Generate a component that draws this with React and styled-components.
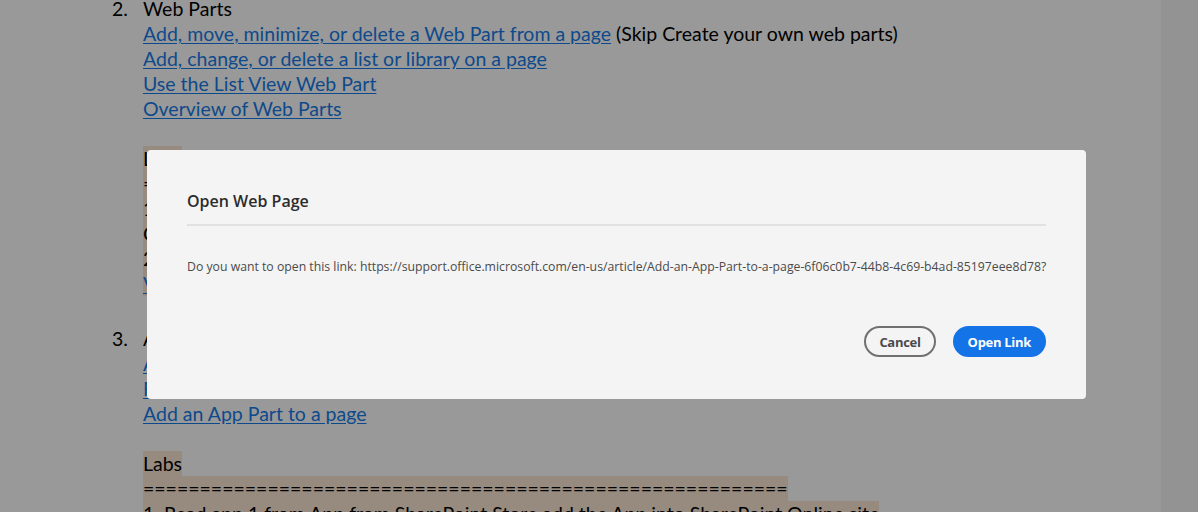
import React from "react";
import styled, { createGlobalStyle } from "styled-components";

const Global = createGlobalStyle`
  html, body { margin: 0; padding: 0; }
  body { width: 1198px; height: 512px; overflow: hidden; background: #ffffff; }
`;

const Page = styled.div`
  position: relative;
  display: flex;
  width: 1198px;
  height: 512px;
  overflow: hidden;
  background: #ffffff;
`;

const Doc = styled.div`
  flex: 1;
  margin-top: -4px;
  font-family: Lato, "Liberation Sans", sans-serif;
  font-size: 19.5px;
  line-height: 25px;
  color: #000000;
`;

const Side = styled.div`
  width: 37px;
  background: #f5f5f5;
`;

const Item = styled.div`
  display: flex;
  margin-left: 112px;
  margin-top: ${(p) => p.$gap || 0}px;
`;

const Num = styled.div`
  width: 31px;
  flex: none;
`;

const Lines = styled.div`
  display: flex;
  flex-direction: column;
  align-items: flex-start;
`;

const Line = styled.div`
  white-space: nowrap;
  min-height: 25px;
  background: ${(p) => (p.$hl ? "#fce8d5" : "transparent")};
`;

const Link = styled.span`
  color: #177ce9;
  text-decoration: underline;
  text-underline-offset: 2px;
`;

const Overlay = styled.div`
  position: absolute;
  inset: 0;
  background: rgba(0, 0, 0, 0.4);
`;

const Dialog = styled.div`
  position: absolute;
  left: 147px;
  top: 150px;
  width: 939px;
  height: 249px;
  box-sizing: border-box;
  padding: 41px 40px 0 40px;
  background: #f4f4f4;
  border-radius: 4px;
  font-family: "Open Sans", "Liberation Sans", sans-serif;
  display: flex;
  flex-direction: column;
`;

const Title = styled.div`
  font-size: 16px;
  font-weight: 600;
  color: #2c2c2c;
  line-height: 20px;
  padding-bottom: 13px;
  border-bottom: 2px solid #e1e1e1;
`;

const Body = styled.div`
  margin-top: 33px;
  font-size: 12.25px;
  line-height: 16px;
  color: #4b4b4b;
  white-space: nowrap;
`;

const Actions = styled.div`
  display: flex;
  justify-content: flex-end;
  gap: 17px;
  margin-top: 51px;
`;

const Button = styled.button`
  height: 31px;
  padding: 0 13px;
  border-radius: 16px;
  font-family: "Open Sans", "Liberation Sans", sans-serif;
  font-size: 13px;
  font-weight: 700;
  letter-spacing: -0.3px;
  cursor: pointer;
  border: 2px solid ${(p) => (p.$primary ? "#1473e6" : "#707070")};
  background: ${(p) => (p.$primary ? "#1473e6" : "transparent")};
  color: ${(p) => (p.$primary ? "#ffffff" : "#4b4b4b")};
`;

const eq = "=".repeat(57);

export default function App() {
  return (
    <>
      <Global />
      <Page>
        <Doc>
          <Item>
            <Num>2.</Num>
            <Lines>
              <Line>Web Parts</Line>
              <Line>
                <Link>Add, move, minimize, or delete a Web Part from a page</Link> (Skip Create your own web parts)
              </Line>
              <Line><Link>Add, change, or delete a list or library on a page</Link></Line>
              <Line><Link>Use the List View Web Part</Link></Line>
              <Line><Link>Overview of Web Parts</Link></Line>
              <Line />
              <Line $hl>Labs</Line>
              <Line $hl>{eq}</Line>
              <Line $hl>1. Add a Web Part to a page and change its properties</Line>
              <Line $hl>Customize a list view on the page</Line>
              <Line $hl>2. Watch the following video</Line>
              <Line $hl><Link>Video: Add a Web Part to a page</Link></Line>
              <Line />
            </Lines>
          </Item>
          <Item $gap={5}>
            <Num>3.</Num>
            <Lines>
              <Line>App Parts</Line>
              <Line><Link>Add an app to a site</Link></Line>
              <Line><Link>Find apps in the SharePoint Store</Link></Line>
              <Line><Link>Add an App Part to a page</Link></Line>
              <Line />
              <Line $hl>Labs</Line>
              <Line $hl>{eq}</Line>
              <Line $hl>1. Read app 1 from App from SharePoint Store add the App into SharePoint Online site</Line>
            </Lines>
          </Item>
        </Doc>
        <Side />
        <Overlay />
        <Dialog>
          <Title>Open Web Page</Title>
          <Body>
            Do you want to open this link: https://support.office.microsoft.com/en-us/article/Add-an-App-Part-to-a-page-6f06c0b7-44b8-4c69-b4ad-85197eee8d78?
          </Body>
          <Actions>
            <Button>Cancel</Button>
            <Button $primary>Open Link</Button>
          </Actions>
        </Dialog>
      </Page>
    </>
  );
}
